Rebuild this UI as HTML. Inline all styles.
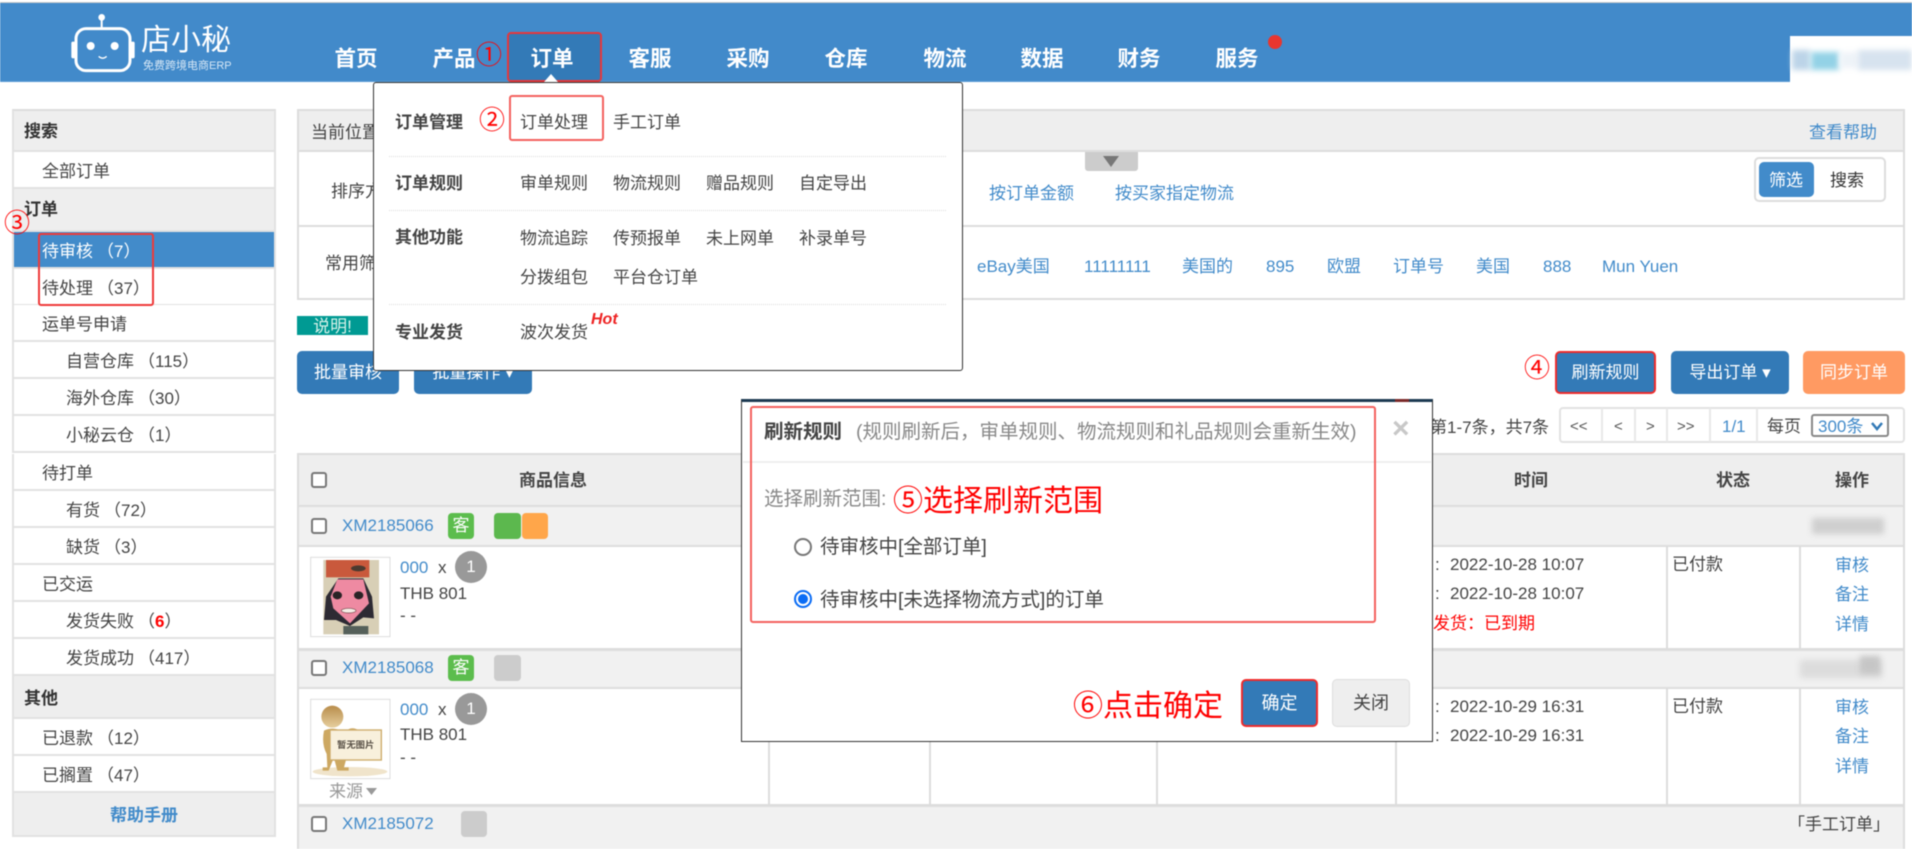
<!DOCTYPE html>
<html lang="zh-CN">
<head>
<meta charset="utf-8">
<title>店小秘</title>
<style>
html,body{margin:0;padding:0;background:#fff;width:1912px;height:849px;overflow:hidden}
#r{position:relative;width:1912px;height:849px;overflow:hidden;font-family:"Liberation Sans","Noto Sans CJK SC",sans-serif;filter:blur(.45px)}
#r div,#r svg{position:absolute;box-sizing:border-box}
.t{white-space:nowrap;line-height:24px;font-size:17px;color:#444;margin-top:1px}
.l{color:#428bca}
.b{font-weight:bold}
.w{color:#fff}
.n{width:98px;text-align:center;top:46px;font-size:21.500px;line-height:26px;font-weight:bold;color:#fff;white-space:nowrap}
.s{left:12px;width:264px;height:37px;line-height:39px;font-size:17px;color:#444;border:solid #e2e2e2;border-width:0 2px 2px 2px;padding-left:28px;white-space:nowrap;background:#fff}
.s2{padding-left:52px}
.s span{margin-left:4px}
.h{background:#eee;font-weight:bold;color:#333;padding-left:10px;height:43px;line-height:42px}
.c{width:32px;text-align:center;color:#f00;font-size:26px;line-height:30px}
.btn{height:43px;border-radius:5px;background:#337ab7;color:#fff;font-size:17px;line-height:43px;text-align:center;white-space:nowrap}
.rb{border:2px solid #ee2c2c}
.cb{width:16px;height:16px;border:2px solid #777;border-radius:3px;background:#fff}
.v{width:2px;background:#ddd}
.dv{left:389px;width:557px;height:0;border-top:1px dotted #ddd}
.g{height:26px;border-radius:4px}
.bl{filter:blur(3px)}
</style>
</head>
<body>
<div id="r">

<!-- header -->
<div style="left:0;top:2px;width:1912px;height:2px;background:#c9c9c9"></div>
<div style="left:0;top:3px;width:1912px;height:79px;background:#428aca;border-bottom:1px solid #5a9bd5"></div>
<div style="left:1790px;top:36px;width:122px;height:50px;background:#fff"></div>
<div class="bl" style="left:1792px;top:50px;width:18px;height:20px;background:#bcd4e8"></div>
<div class="bl" style="left:1811px;top:52px;width:28px;height:18px;background:#93d2e6"></div>
<div class="bl" style="left:1840px;top:52px;width:18px;height:16px;background:#eef3f8"></div>
<div class="bl" style="left:1858px;top:50px;width:54px;height:20px;background:#d7e3ef"></div>

<svg style="left:50px;top:0" width="250" height="100" viewBox="0 0 750 300">
<rect x="78" y="86" width="162" height="126" rx="30" fill="none" stroke="#fff" stroke-width="9"/>
<rect x="64" y="125" width="12" height="50" rx="5" fill="#fff"/>
<rect x="242" y="125" width="12" height="50" rx="5" fill="#fff"/>
<circle cx="155" cy="52" r="10" fill="#fff"/>
<path d="M155 60V86" stroke="#fff" stroke-width="6"/>
<circle cx="122" cy="138" r="12" fill="#fff"/>
<circle cx="194" cy="138" r="12" fill="#fff"/>
<path d="M146 169q12 11 24 0" stroke="#fff" stroke-width="4" fill="none"/>
</svg>
<div class="t w" style="left:141px;top:23px;font-size:30px;line-height:34px">店小秘</div>
<div class="t" style="left:143px;top:58px;font-size:11px;line-height:14px;color:#d5e6f5">免费跨境电商ERP</div>

<div style="left:507px;top:32px;width:95px;height:50px;background:#337ab7;border:2px solid #e8363a;border-radius:4px"></div>
<svg style="left:544px;top:74px" width="14" height="8" viewBox="0 0 14 8"><path d="M7 0L14 8H0Z" fill="#fff"/></svg>
<div class="n" style="left:307px">首页</div>
<div class="n" style="left:405px">产品</div>
<div class="n" style="left:503px">订单</div>
<div class="n" style="left:601px">客服</div>
<div class="n" style="left:699px">采购</div>
<div class="n" style="left:797px">仓库</div>
<div class="n" style="left:896px">物流</div>
<div class="n" style="left:993px">数据</div>
<div class="n" style="left:1090px">财务</div>
<div class="n" style="left:1188px">服务</div>
<div style="left:1268px;top:35px;width:14px;height:14px;border-radius:50%;background:#e8362f"></div>
<div class="c" style="left:473px;top:40px">①</div>

<!-- sidebar -->
<div class="s h" style="top:109px;border-top:2px solid #ddd;line-height:41px">搜索</div>
<div class="s" style="top:152px">全部订单</div>
<div class="s h" style="top:189px">订单</div>
<div class="s" style="top:232px;background:#428bca;color:#fff">待审核<span>（7）</span></div>
<div class="s" style="top:269px">待处理<span>（37）</span></div>
<div class="s" style="top:305px">运单号申请</div>
<div class="s s2" style="top:342px">自营仓库<span>（115）</span></div>
<div class="s s2" style="top:379px">海外仓库<span>（30）</span></div>
<div class="s s2" style="top:416px">小秘云仓<span>（1）</span></div>
<div class="s" style="top:454px">待打单</div>
<div class="s s2" style="top:491px">有货<span>（72）</span></div>
<div class="s s2" style="top:528px">缺货<span>（3）</span></div>
<div class="s" style="top:565px">已交运</div>
<div class="s s2" style="top:602px">发货失败<span>（<b style="color:#f00">6</b>）</span></div>
<div class="s s2" style="top:639px">发货成功<span>（417）</span></div>
<div class="s h" style="top:676px;line-height:46px">其他</div>
<div class="s" style="top:719px">已退款<span>（12）</span></div>
<div class="s" style="top:756px">已搁置<span>（47）</span></div>
<div class="s h" style="top:793px;height:44px;padding:0;text-align:center;font-weight:bold;color:#428bca;line-height:45px">帮助手册</div>
<div style="left:38px;top:233px;width:116px;height:73px;border:2px solid #ee3a3a;border-radius:3px"></div>
<div class="c" style="left:1px;top:208px">③</div>

<!-- main panel top -->
<div style="left:297px;top:109px;width:1608px;height:43px;background:#eee;border:2px solid #ddd"></div>
<div class="t" style="left:311px;top:120px">当前位置</div>
<div class="t l" style="left:1809px;top:120px">查看帮助</div>
<div style="left:297px;top:152px;width:1608px;height:75px;border:solid #ddd;border-width:0 2px 2px 2px"></div>
<div style="left:297px;top:227px;width:1608px;height:73px;border:solid #ddd;border-width:0 2px 2px 2px"></div>
<div class="t" style="left:331px;top:179px">排序方式</div>
<div class="t" style="left:325px;top:251px">常用筛选</div>
<div style="left:1085px;top:152px;width:53px;height:19px;background:#ccc;border-radius:0 0 3px 3px"></div>
<svg style="left:1103px;top:156px" width="16" height="11" viewBox="0 0 16 11"><path d="M0 0H16L8 11Z" fill="#777"/></svg>
<div style="left:960px;top:180px;width:1px;height:23px;background:#428bca"></div>
<div class="t l" style="left:989px;top:181px">按订单金额</div>
<div class="t l" style="left:1115px;top:181px">按买家指定物流</div>
<div style="left:1754px;top:157px;width:132px;height:45px;border:2px solid #ddd;border-radius:5px;background:#fff"></div>
<div style="left:1759px;top:162px;width:55px;height:35px;background:#428bca;border-radius:5px"></div>
<div class="t w" style="left:1769px;top:168px">筛选</div>
<div class="t" style="left:1830px;top:168px;color:#333">搜索</div>

<div class="t l" style="left:977px;top:254px">eBay美国</div>
<div class="t l" style="left:1084px;top:254px">11111111</div>
<div class="t l" style="left:1182px;top:254px">美国的</div>
<div class="t l" style="left:1266px;top:254px">895</div>
<div class="t l" style="left:1327px;top:254px">欧盟</div>
<div class="t l" style="left:1393px;top:254px">订单号</div>
<div class="t l" style="left:1476px;top:254px">美国</div>
<div class="t l" style="left:1543px;top:254px">888</div>
<div class="t l" style="left:1602px;top:254px">Mun Yuen</div>

<div style="left:297px;top:316px;width:71px;height:19px;background:#009a93"></div>
<div class="t" style="left:297px;top:314px;width:71px;color:#d8f2ea;text-align:center">说明!</div>

<!-- toolbar -->
<div class="btn" style="left:297px;top:351px;width:102px">批量审核</div>
<div class="btn" style="left:414px;top:351px;width:118px">批量操作 ▾</div>
<div class="c" style="left:1521px;top:353px">④</div>
<div class="btn rb" style="left:1555px;top:351px;width:101px;line-height:39px">刷新规则</div>
<div class="btn" style="left:1671px;top:351px;width:118px">导出订单 ▾</div>
<div class="btn" style="left:1803px;top:351px;width:102px;background:#ff9a62">同步订单</div>

<!-- pagination -->
<div class="t" style="left:1430px;top:415px">第1-7条，共7条</div>
<div style="left:1559px;top:407px;width:346px;height:36px;border:2px solid #e2e2e2;border-radius:4px"></div>
<div class="v" style="left:1601px;top:408px;height:34px;background:#e8e8e8"></div>
<div class="v" style="left:1634px;top:408px;height:34px;background:#e8e8e8"></div>
<div class="v" style="left:1666px;top:408px;height:34px;background:#e8e8e8"></div>
<div class="v" style="left:1709px;top:408px;height:34px;background:#e8e8e8"></div>
<div class="v" style="left:1756px;top:408px;height:34px;background:#e8e8e8"></div>
<div class="t" style="left:1570px;top:414px;font-size:15px;color:#555">&lt;&lt;</div>
<div class="t" style="left:1614px;top:414px;font-size:15px;color:#555">&lt;</div>
<div class="t" style="left:1646px;top:414px;font-size:15px;color:#555">&gt;</div>
<div class="t" style="left:1677px;top:414px;font-size:15px;color:#555">&gt;&gt;</div>
<div class="t l" style="left:1722px;top:414px">1/1</div>
<div class="t" style="left:1767px;top:414px">每页</div>
<div style="left:1811px;top:414px;width:78px;height:23px;border:2px solid #888;border-radius:3px;background:#fff"></div>
<div class="t l" style="left:1818px;top:414px">300条</div>
<svg style="left:1870px;top:421px" width="14" height="10" viewBox="0 0 14 10"><path d="M2 2L7 8L12 2" fill="none" stroke="#337ab7" stroke-width="2.5"/></svg>

<!-- table -->
<div style="left:297px;top:453px;width:1608px;height:54px;background:#eee;border:2px solid #ddd"></div>
<div class="cb" style="left:311px;top:472px"></div>
<div class="t b" style="left:519px;top:468px">商品信息</div>
<div class="t b" style="left:1514px;top:468px">时间</div>
<div class="t b" style="left:1716px;top:468px">状态</div>
<div class="t b" style="left:1835px;top:468px">操作</div>

<div style="left:297px;top:507px;width:1608px;height:40px;background:#f1f1f1;border:solid #ddd;border-width:0 2px 2px 2px"></div>
<div class="cb" style="left:311px;top:518px"></div>
<div class="t l" style="left:342px;top:513px">XM2185066</div>
<div class="g" style="left:448px;top:513px;width:26px;background:#5cbd4d;color:#fff;font-size:17px;line-height:26px;text-align:center">客</div>
<div class="g" style="left:494px;top:513px;width:27px;background:#5cb84e"></div>
<div class="g" style="left:522px;top:513px;width:26px;background:#ffa64a"></div>
<div class="bl" style="left:1812px;top:518px;width:72px;height:16px;background:#cfcfcf"></div>

<div style="left:297px;top:547px;width:1608px;height:103px;border:solid #ddd;border-width:0 2px 2px 2px"></div>
<div class="v" style="left:1666px;top:547px;height:102px"></div>
<div class="v" style="left:1799px;top:547px;height:102px"></div>

<div style="left:297px;top:649px;width:1608px;height:40px;background:#f1f1f1;border:solid #ddd;border-width:2px 2px 2px 2px"></div>
<div class="cb" style="left:311px;top:660px"></div>
<div class="t l" style="left:342px;top:655px">XM2185068</div>
<div class="g" style="left:448px;top:655px;width:26px;background:#5cbd4d;color:#fff;font-size:17px;line-height:26px;text-align:center">客</div>
<div class="g" style="left:494px;top:655px;width:27px;background:#ccc"></div>
<div class="bl" style="left:1800px;top:660px;width:82px;height:18px;background:#dcdcdc"></div>
<div class="bl" style="left:1860px;top:656px;width:20px;height:18px;background:#c6c6c6"></div>

<div style="left:297px;top:689px;width:1608px;height:117px;border:solid #ddd;border-width:0 2px 2px 2px"></div>
<div class="v" style="left:768px;top:689px;height:116px"></div>
<div class="v" style="left:929px;top:689px;height:116px"></div>
<div class="v" style="left:1156px;top:689px;height:116px"></div>
<div class="v" style="left:1395px;top:689px;height:116px"></div>
<div class="v" style="left:1666px;top:689px;height:116px"></div>
<div class="v" style="left:1799px;top:689px;height:116px"></div>

<div style="left:297px;top:805px;width:1608px;height:44px;background:#f1f1f1;border:solid #ddd;border-width:2px 2px 0 2px"></div>
<div class="cb" style="left:311px;top:816px"></div>
<div class="t l" style="left:342px;top:811px">XM2185072</div>
<div class="g" style="left:461px;top:811px;width:26px;background:#ccc"></div>
<div class="t" style="left:1788px;top:812px">「手工订单」</div>

<!-- product images -->
<svg style="left:300px;top:540px" width="200" height="309" viewBox="0 0 600 927">
<defs><linearGradient id="gd" x1="0" y1="0" x2="0" y2="1"><stop offset="0" stop-color="#b98d4b"/><stop offset="1" stop-color="#e6cf9e"/></linearGradient></defs>
<rect x="32" y="52" width="238" height="238" fill="#fff" stroke="#ddd" stroke-width="3"/>
<rect x="70" y="60" width="167" height="223" fill="#d8cfb6"/>
<rect x="78" y="60" width="130" height="52" fill="#c9593c"/>
<ellipse cx="175" cy="85" rx="22" ry="9" fill="#4b3a30"/>
<path d="M115 115H190L216 170L222 235L190 232L150 258L108 240L72 240L78 170Z" fill="#2d2a33"/>
<path d="M112 118H190L207 190L150 250L100 205L92 170Z" fill="#ee8aa2"/>
<ellipse cx="112" cy="166" rx="14" ry="12" fill="#2a2326"/>
<ellipse cx="176" cy="166" rx="14" ry="12" fill="#2a2326"/>
<ellipse cx="146" cy="212" rx="22" ry="7" fill="#f6eee6" stroke="#7a4a50" stroke-width="2"/>
<path d="M130 258h75v25h-75z" fill="#55605a"/>
<rect x="32" y="478" width="238" height="238" fill="#fff" stroke="#ddd" stroke-width="3"/>
<ellipse cx="150" cy="695" rx="112" ry="14" fill="#f0e4cb"/>
<circle cx="97" cy="530" r="33" fill="url(#gd)"/>
<path d="M72 572q25-12 50 0l16 8v80l-6 22h14v10H112l-8-30h-6l-12 30H68v-10h14l-2-40q-16-30-8-70z" fill="#cda862"/>
<path d="M145 568q14-8 34 4l-6 8h-26z" fill="#cda862"/>
<rect x="90" y="570" width="154" height="90" fill="#f8f0dc" stroke="#cdab69" stroke-width="4"/>
<text x="167" y="624" font-size="28" font-weight="bold" text-anchor="middle" fill="#5a5248" font-family="'Liberation Sans','Noto Sans CJK SC',sans-serif">暂无图片</text>
</svg>

<!-- row 1 text -->
<div class="t l" style="left:400px;top:555px">000</div>
<div class="t" style="left:438px;top:555px">x</div>
<div class="t w" style="left:455px;top:550px;width:32px;height:32px;line-height:32px;border-radius:50%;background:#999;text-align:center">1</div>
<div class="t" style="left:400px;top:581px">THB 801</div>
<div class="t" style="left:400px;top:603px">- -</div>
<div class="t" style="left:1435px;top:552px">:</div>
<div class="t" style="left:1450px;top:552px">2022-10-28 10:07</div>
<div class="t" style="left:1435px;top:581px">:</div>
<div class="t" style="left:1450px;top:581px">2022-10-28 10:07</div>
<div class="t" style="left:1433px;top:611px;color:#f00">发货：已到期</div>
<div class="t" style="left:1672px;top:552px">已付款</div>
<div class="t l" style="left:1835px;top:553px">审核</div>
<div class="t l" style="left:1835px;top:582px">备注</div>
<div class="t l" style="left:1835px;top:612px">详情</div>

<!-- row 2 text -->
<div class="t l" style="left:400px;top:697px">000</div>
<div class="t" style="left:438px;top:697px">x</div>
<div class="t w" style="left:455px;top:692px;width:32px;height:32px;line-height:32px;border-radius:50%;background:#999;text-align:center">1</div>
<div class="t" style="left:400px;top:722px">THB 801</div>
<div class="t" style="left:400px;top:745px">- -</div>
<div class="t" style="left:329px;top:779px;color:#999">来源</div>
<svg style="left:366px;top:788px" width="11" height="7" viewBox="0 0 11 7"><path d="M0 0H11L5.500 7Z" fill="#999"/></svg>
<div class="t" style="left:1435px;top:694px">:</div>
<div class="t" style="left:1450px;top:694px">2022-10-29 16:31</div>
<div class="t" style="left:1435px;top:723px">:</div>
<div class="t" style="left:1450px;top:723px">2022-10-29 16:31</div>
<div class="t" style="left:1672px;top:694px">已付款</div>
<div class="t l" style="left:1835px;top:695px">审核</div>
<div class="t l" style="left:1835px;top:724px">备注</div>
<div class="t l" style="left:1835px;top:754px">详情</div>

<!-- modal -->
<div style="left:741px;top:399px;width:692px;height:343px;background:#fff;border:solid #333;border-width:3px 1.500px 1.500px 1.500px;border-top-color:#1d3a52"></div>
<div style="left:1395px;top:399px;width:14px;height:3px;background:#7a2a2a"></div>
<div style="left:743px;top:461px;width:688px;height:2px;background:#eee"></div>
<div style="left:750px;top:406px;width:626px;height:217px;border:2px solid #f4625e;border-radius:3px"></div>
<div class="t b" style="left:764px;top:419px;font-size:19.500px">刷新规则</div>
<div class="t" style="left:856px;top:419px;color:#888;font-size:19.500px">(规则刷新后，审单规则、物流规则和礼品规则会重新生效)</div>
<div class="t b" style="left:1392px;top:414px;font-size:30px;line-height:28px;color:#c8c8c8">×</div>
<div class="t" style="left:764px;top:486px;color:#888;font-size:19.500px">选择刷新范围:</div>
<div class="t" style="left:893px;top:483px;font-size:30px;line-height:36px;color:#f00">⑤选择刷新范围</div>
<div style="left:794px;top:538px;width:18px;height:18px;border-radius:50%;border:2px solid #777;background:#fff"></div>
<div class="t" style="left:820px;top:534px;font-size:19.500px">待审核中[全部订单]</div>
<div style="left:794px;top:590px;width:18px;height:18px;border-radius:50%;border:2px solid #0a6cf5;background:#fff"></div>
<div style="left:798px;top:594px;width:10px;height:10px;border-radius:50%;background:#0a6cf5"></div>
<div class="t" style="left:820px;top:587px;font-size:19.500px">待审核中[未选择物流方式]的订单</div>
<div class="t" style="left:1073px;top:688px;font-size:30px;line-height:36px;color:#f00">⑥点击确定</div>
<div class="btn rb" style="left:1241px;top:679px;width:77px;height:48px;line-height:44px;font-size:18px">确定</div>
<div class="btn" style="left:1332px;top:679px;width:78px;height:48px;line-height:46px;background:#eee;color:#444;border:1px solid #ddd;font-size:18px">关闭</div>

<!-- dropdown -->
<div style="left:373px;top:82px;width:590px;height:289px;background:#fff;border:1.500px solid #333;border-radius:3px"></div>
<div class="dv" style="top:156px"></div>
<div class="dv" style="top:210px"></div>
<div class="dv" style="top:304px"></div>
<div style="left:509px;top:95px;width:95px;height:46px;border:2px solid #f4625e;border-radius:3px"></div>
<div class="c" style="left:476px;top:105px">②</div>
<div class="t b" style="left:395px;top:110px">订单管理</div>
<div class="t" style="left:520px;top:110px">订单处理</div>
<div class="t" style="left:613px;top:110px">手工订单</div>
<div class="t b" style="left:395px;top:171px">订单规则</div>
<div class="t" style="left:520px;top:171px">审单规则</div>
<div class="t" style="left:613px;top:171px">物流规则</div>
<div class="t" style="left:706px;top:171px">赠品规则</div>
<div class="t" style="left:799px;top:171px">自定导出</div>
<div class="t b" style="left:395px;top:225px">其他功能</div>
<div class="t" style="left:520px;top:226px">物流追踪</div>
<div class="t" style="left:613px;top:226px">传预报单</div>
<div class="t" style="left:706px;top:226px">未上网单</div>
<div class="t" style="left:799px;top:226px">补录单号</div>
<div class="t" style="left:520px;top:265px">分拨组包</div>
<div class="t" style="left:613px;top:265px">平台仓订单</div>
<div class="t b" style="left:395px;top:320px">专业发货</div>
<div class="t" style="left:520px;top:320px">波次发货</div>
<div class="t" style="left:591px;top:307px;color:#ee2222;font-style:italic;font-weight:bold;font-size:16px">Hot</div>

</div>
</body>
</html>
